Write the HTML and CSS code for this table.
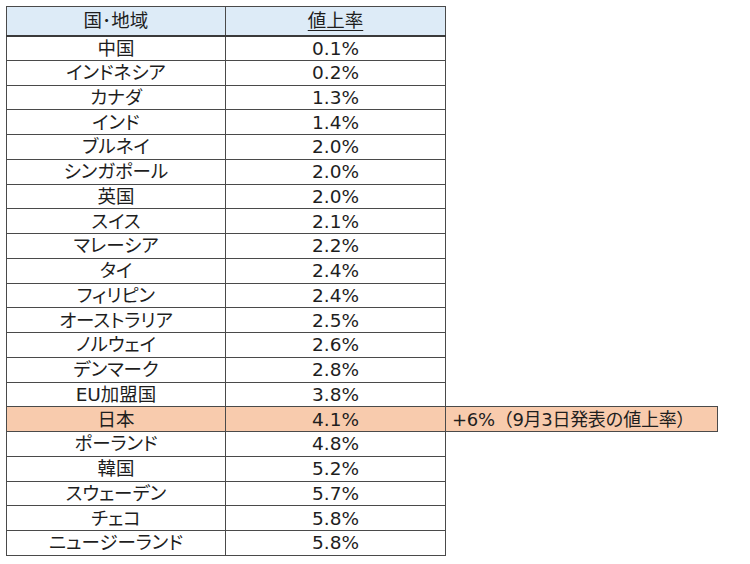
FILE: index.html
```html
<!DOCTYPE html>
<html lang="ja">
<head>
<meta charset="utf-8">
<link rel="stylesheet" href="styles.css">
</head>
<body>
<table class="rates">
  <colgroup><col class="c1"><col class="c2"><col class="c3"></colgroup>
  <thead>
    <tr class="head"><th>国･地域</th><th><u>値上率</u></th><th class="blank"></th></tr>
  </thead>
  <tbody>
    <tr><td>中国</td><td>0.1%</td><td class="blank"></td></tr>
    <tr><td>インドネシア</td><td>0.2%</td><td class="blank"></td></tr>
    <tr><td>カナダ</td><td>1.3%</td><td class="blank"></td></tr>
    <tr><td>インド</td><td>1.4%</td><td class="blank"></td></tr>
    <tr><td>ブルネイ</td><td>2.0%</td><td class="blank"></td></tr>
    <tr><td>シンガポール</td><td>2.0%</td><td class="blank"></td></tr>
    <tr><td>英国</td><td>2.0%</td><td class="blank"></td></tr>
    <tr><td>スイス</td><td>2.1%</td><td class="blank"></td></tr>
    <tr><td>マレーシア</td><td>2.2%</td><td class="blank"></td></tr>
    <tr><td>タイ</td><td>2.4%</td><td class="blank"></td></tr>
    <tr><td>フィリピン</td><td>2.4%</td><td class="blank"></td></tr>
    <tr><td>オーストラリア</td><td>2.5%</td><td class="blank"></td></tr>
    <tr><td>ノルウェイ</td><td>2.6%</td><td class="blank"></td></tr>
    <tr><td>デンマーク</td><td>2.8%</td><td class="blank"></td></tr>
    <tr><td>EU加盟国</td><td>3.8%</td><td class="blank"></td></tr>
    <tr class="hl"><td>日本</td><td>4.1%</td><td class="note">+6%（9月3日発表の値上率）</td></tr>
    <tr><td>ポーランド</td><td>4.8%</td><td class="blank"></td></tr>
    <tr><td>韓国</td><td>5.2%</td><td class="blank"></td></tr>
    <tr><td>スウェーデン</td><td>5.7%</td><td class="blank"></td></tr>
    <tr><td>チェコ</td><td>5.8%</td><td class="blank"></td></tr>
    <tr><td>ニュージーランド</td><td>5.8%</td><td class="blank"></td></tr>
  </tbody>
</table>
</body>
</html>
```
FILE: styles.css
```css
html, body {
  margin: 0;
  padding: 0;
  background: #ffffff;
}
body {
  padding: 6px 0 0 6px;
  font-family: "DejaVu Sans", "Noto Sans CJK JP", sans-serif;
  font-feature-settings: "palt";
  color: #1e1e1e;
}
.rates {
  border-collapse: collapse;
  table-layout: fixed;
  width: 711px;
  font-size: 18.5px;
}
.c1 { width: 219px; }
.c2 { width: 220px; }
.c3 { width: 272px; }
.rates th,
.rates td {
  border: 1.5px solid #4a4a4a;
  padding: 0;
  text-align: center;
  font-weight: normal;
  line-height: 21px;
  white-space: nowrap;
}
.rates tbody tr { height: 24.76px; }
.rates .head { height: 29px; }
.rates .head th {
  background: #ddebf7;
  border-bottom: 2.5px solid #3a3a3a;
}
.rates u {
  text-decoration-thickness: 1px;
  text-underline-offset: 3px;
}
.rates .blank,
.rates .head .blank {
  border: none;
  background: transparent;
}
.rates .hl td { background: #f8cbad; }
.rates .note {
  text-align: left;
  padding-left: 6px;
  font-size: 18px;
  letter-spacing: -0.3px;
  font-feature-settings: normal;
}
```
